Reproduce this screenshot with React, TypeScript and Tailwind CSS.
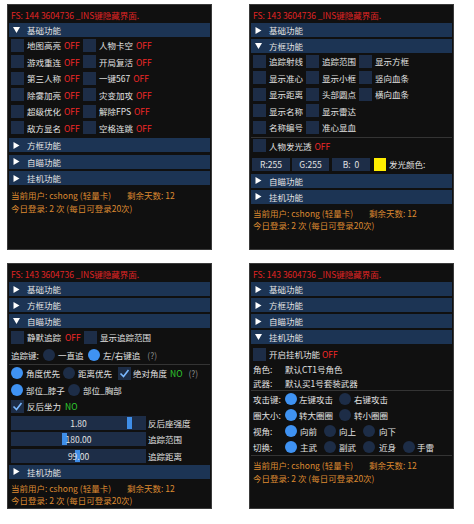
import React from 'react';

const Box = ({ checked = false }: { checked?: boolean }) => (
  <div className="w-[13px] h-[13px] shrink-0 bg-[#1d2d47] flex items-center justify-center">
    {checked && (
      <svg width="11" height="11" viewBox="0 0 11 11">
        <polyline points="1.5,5.5 4.5,8.5 9.5,2" fill="none" stroke="#7ab8ff" strokeWidth="1.6" />
      </svg>
    )}
  </div>
);

const Radio = ({ on = false }: { on?: boolean }) => (
  <div className={on ? 'w-[12px] h-[12px] shrink-0 rounded-full bg-[#3f92f2]' : 'w-[12px] h-[12px] shrink-0 rounded-full bg-[#1d2d47]'} />
);

const Off = () => <span className="text-[#f02828]">OFF</span>;
const No = () => <span className="text-[#2fcc2f]">NO</span>;
const Help = () => <span className="text-[#8a8a8a]">(?)</span>;

const Header = ({ label, open = false }: { label: string; open?: boolean }) => (
  <div className="h-[14px] bg-[#1c3454] flex items-center pl-[4px]">
    {open ? (
      <svg width="7" height="6" viewBox="0 0 7 6" className="shrink-0">
        <polygon points="0,0 7,0 3.5,6" fill="#ffffff" />
      </svg>
    ) : (
      <svg width="7" height="7" viewBox="0 0 7 7" className="shrink-0">
        <polygon points="0.5,0 6.5,3.5 0.5,7" fill="#ffffff" />
      </svg>
    )}
    <span className="ml-[7px]">{label}</span>
  </div>
);

const Footer = () => (
  <div className="pl-[2px] text-[#dc8a30] leading-[12.5px]">
    <div>
      当前用户: cshong (轻量卡)<span className="ml-[16px]">剩余天数: 12</span>
    </div>
    <div>今日登录: 2 次 (每日可登录20次)</div>
  </div>
);

const Panel = ({ title, children }: { title: string; children: React.ReactNode }) => (
  <div className="w-[205px] h-[246px] bg-[#101010] border border-[#3a3a3a] px-[1px] pt-[4px] flex flex-col text-[#e2e2e2]">
    <div className="h-[12px] leading-[12px] pl-[2px] text-[#e02424]">{title}</div>
    {children}
  </div>
);

const Slider = ({ value, label, handle }: { value: string; label: string; handle: string }) => (
  <div className="flex items-center pl-[2px] h-[14px]">
    <div className="relative w-[135px] h-[14px] bg-[#1d2d47] flex items-center justify-center">
      <div className={'absolute top-[1px] w-[5px] h-[12px] bg-[#3f8ee8] ' + handle} />
      <span className="relative">{value}</span>
    </div>
    <span className="ml-[2px]">{label}</span>
  </div>
);

const basic = [
  ['地图高亮', '人物卡空'],
  ['游戏重连', '开局复活'],
  ['第三人称', '一键567'],
  ['除雾加亮', '灾变加攻'],
  ['超级优化', '解除FPS'],
  ['敌方显名', '空格连跳'],
];

const boxes = [
  ['追踪射线', '追踪范围', '显示方框'],
  ['显示准心', '显示小框', '竖向血条'],
  ['显示距离', '头部圆点', '横向血条'],
  ['显示名称', '显示雷达', ''],
  ['名称编号', '准心显血', ''],
];

const PanelBasic = () => (
  <Panel title="FS: 144 3604736 _INS键隐藏界面.">
    <div className="mt-[2px]">
      <Header label="基础功能" open />
    </div>
    <div className="flex flex-col">
      {basic.map((row, i) => (
        <div key={i} className="flex h-[16.5px] items-center pl-[2px]">
          {row.map((t) => (
            <div key={t} className="w-[72px] flex items-center">
              <Box />
              <span className="ml-[3px]">{t}</span>
              <span className="ml-[3px]">
                <Off />
              </span>
            </div>
          ))}
        </div>
      ))}
    </div>
    <div className="mt-[2px] flex flex-col gap-[2.5px]">
      <Header label="方框功能" />
      <Header label="自瞄功能" />
      <Header label="挂机功能" />
    </div>
    <div className="mt-[4px]">
      <Footer />
    </div>
  </Panel>
);

const PanelBox = () => (
  <Panel title="FS: 143 3604736 _INS键隐藏界面.">
    <div className="mt-[2px] flex flex-col gap-[2px]">
      <Header label="基础功能" />
      <Header label="方框功能" open />
    </div>
    <div className="flex flex-col">
      {boxes.map((row, i) => (
        <div key={i} className="flex h-[16.5px] items-center pl-[2px]">
          {row.map((t, j) =>
            t ? (
              <div key={j} className="w-[53px] flex items-center">
                <Box />
                <span className="ml-[3px]">{t}</span>
              </div>
            ) : null
          )}
        </div>
      ))}
    </div>
    <div className="mt-[1px] h-px bg-[#343434]" />
    <div className="flex h-[16.5px] items-center pl-[2px]">
      <Box />
      <span className="ml-[3px]">人物发光透</span>
      <span className="ml-[3px]">
        <Off />
      </span>
    </div>
    <div className="mt-[3.5px] flex items-center pl-[1px] h-[13px]">
      <div className="w-[38px] h-[13px] bg-[#1d2d47] flex items-center justify-center">R:255</div>
      <div className="ml-[2px] w-[37px] h-[13px] bg-[#1d2d47] flex items-center justify-center">G:255</div>
      <div className="ml-[3px] w-[38px] h-[13px] bg-[#1d2d47] flex items-center justify-center">B:&nbsp;&nbsp;0</div>
      <div className="ml-[4px] w-[12px] h-[13px] bg-[#ffee00]" />
      <span className="ml-[3px]">发光颜色:</span>
    </div>
    <div className="mt-[3px] flex flex-col gap-[2px]">
      <Header label="自瞄功能" />
      <Header label="挂机功能" />
    </div>
    <div className="mt-[3px]">
      <Footer />
    </div>
  </Panel>
);

const PanelAim = () => (
  <Panel title="FS: 143 3604736 _INS键隐藏界面.">
    <div className="mt-[2px] flex flex-col gap-[2px]">
      <Header label="基础功能" />
      <Header label="方框功能" />
      <Header label="自瞄功能" open />
    </div>
    <div className="flex h-[18px] items-center pl-[2px]">
      <div className="w-[73px] flex items-center">
        <Box />
        <span className="ml-[3px]">静默追踪</span>
        <span className="ml-[4px]">
          <Off />
        </span>
      </div>
      <Box />
      <span className="ml-[3px]">显示追踪范围</span>
    </div>
    <div className="flex h-[18px] items-center pl-[2px]">
      <span className="w-[32px]">追踪键:</span>
      <div className="w-[45px] flex items-center">
        <Radio />
        <span className="ml-[3px]">一直追</span>
      </div>
      <Radio on />
      <span className="ml-[3px]">左/右键追</span>
      <span className="ml-[7px]">
        <Help />
      </span>
    </div>
    <div className="h-px bg-[#343434]" />
    <div className="flex h-[16.5px] items-center pl-[2px]">
      <div className="w-[52px] flex items-center">
        <Radio on />
        <span className="ml-[3px]">角度优先</span>
      </div>
      <div className="w-[55px] flex items-center">
        <Radio />
        <span className="ml-[3px]">距离优先</span>
      </div>
      <Box checked />
      <span className="ml-[2px]">绝对角度</span>
      <span className="ml-[3px]">
        <No />
      </span>
      <span className="ml-[6px]">
        <Help />
      </span>
    </div>
    <div className="flex h-[16.5px] items-center pl-[2px]">
      <div className="w-[57px] flex items-center">
        <Radio on />
        <span className="ml-[3px]">部位_脖子</span>
      </div>
      <Radio />
      <span className="ml-[3px]">部位_胸部</span>
    </div>
    <div className="flex h-[16.5px] items-center pl-[2px]">
      <Box checked />
      <span className="ml-[3px]">反后坐力</span>
      <span className="ml-[4px]">
        <No />
      </span>
    </div>
    <div className="mt-[1px] flex flex-col gap-[2.5px]">
      <Slider value="1.80" label="反后座强度" handle="left-[116px]" />
      <Slider value="180.00" label="追踪范围" handle="left-[51px]" />
      <Slider value="99.00" label="追踪距离" handle="left-[64px]" />
    </div>
    <div className="mt-[2px]">
      <Header label="挂机功能" />
    </div>
    <div className="mt-[3px]">
      <Footer />
    </div>
  </Panel>
);

const PanelHang = () => (
  <Panel title="FS: 143 3604736 _INS键隐藏界面.">
    <div className="mt-[2px] flex flex-col gap-[2px]">
      <Header label="基础功能" />
      <Header label="方框功能" />
      <Header label="自瞄功能" />
      <Header label="挂机功能" open />
    </div>
    <div className="mt-[2px] flex h-[16px] items-center pl-[2px]">
      <Box />
      <span className="ml-[3px]">开启挂机功能</span>
      <span className="ml-[2px]">
        <Off />
      </span>
    </div>
    <div className="flex h-[14px] items-center pl-[2px]">
      <span className="w-[32px]">角色:</span>
      <span>默认CT1号角色</span>
    </div>
    <div className="flex h-[14px] items-center pl-[2px]">
      <span className="w-[32px]">武器:</span>
      <span>默认买1号套装武器</span>
    </div>
    <div className="h-px bg-[#343434]" />
    <div className="flex h-[16px] items-center pl-[2px]">
      <span className="w-[32px]">攻击键:</span>
      <div className="w-[54px] flex items-center">
        <Radio on />
        <span className="ml-[2px]">左键攻击</span>
      </div>
      <Radio />
      <span className="ml-[3px]">右键攻击</span>
    </div>
    <div className="flex h-[16px] items-center pl-[2px]">
      <span className="w-[32px]">圈大小:</span>
      <div className="w-[54px] flex items-center">
        <Radio on />
        <span className="ml-[2px]">转大圈圈</span>
      </div>
      <Radio />
      <span className="ml-[3px]">转小圈圈</span>
    </div>
    <div className="flex h-[16px] items-center pl-[2px]">
      <span className="w-[32px]">视角:</span>
      <div className="w-[39px] flex items-center">
        <Radio on />
        <span className="ml-[3px]">向前</span>
      </div>
      <div className="w-[39px] flex items-center">
        <Radio />
        <span className="ml-[3px]">向上</span>
      </div>
      <div className="w-[40px] flex items-center">
        <Radio />
        <span className="ml-[4px]">向下</span>
      </div>
    </div>
    <div className="flex h-[16px] items-center pl-[2px]">
      <span className="w-[32px]">切换:</span>
      <div className="w-[39px] flex items-center">
        <Radio on />
        <span className="ml-[3px]">主武</span>
      </div>
      <div className="w-[39px] flex items-center">
        <Radio />
        <span className="ml-[3px]">副武</span>
      </div>
      <div className="w-[40px] flex items-center">
        <Radio />
        <span className="ml-[4px]">近身</span>
      </div>
      <Radio />
      <span className="ml-[2px]">手雷</span>
    </div>
    <div className="h-px bg-[#343434]" />
    <div className="mt-[3px]">
      <Footer />
    </div>
  </Panel>
);

export default function App() {
  return (
    <div className="w-[474px] h-[524px] bg-white pl-[7px] pt-[4px] grid grid-cols-[205px_205px] gap-x-[37px] gap-y-[13px] content-start font-['Noto_Sans_CJK_SC','Noto_Sans',sans-serif] text-[8.5px] leading-[12px]">
      <PanelBasic />
      <PanelBox />
      <PanelAim />
      <PanelHang />
    </div>
  );
}
